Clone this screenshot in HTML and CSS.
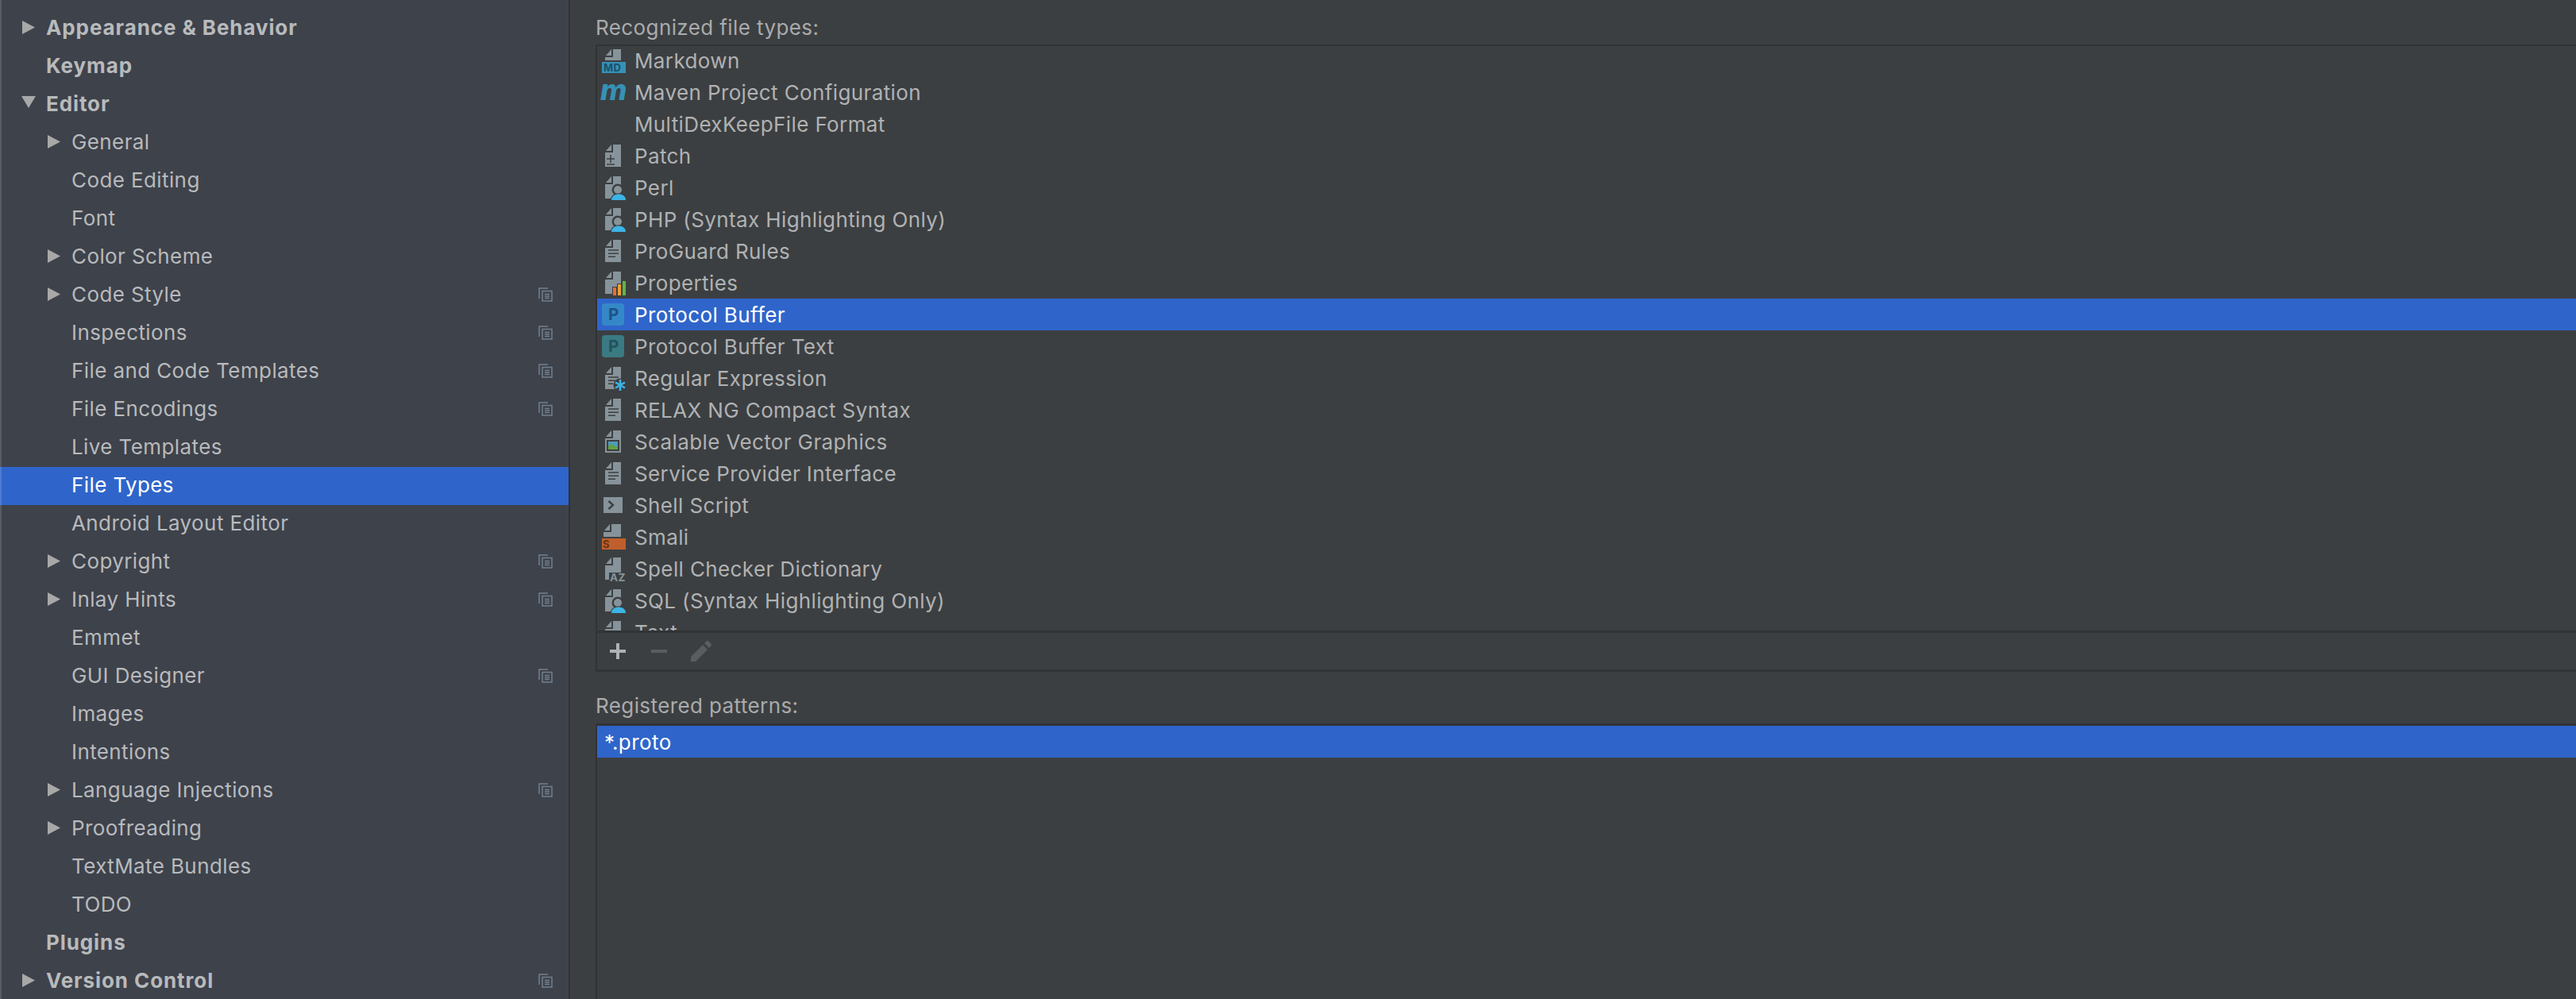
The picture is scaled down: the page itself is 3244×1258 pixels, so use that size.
FILE: index.html
```html
<!DOCTYPE html>
<html lang="en">
<head>
<meta charset="utf-8">
<title>File Types</title>
<link rel="stylesheet" href="styles.css">
</head>
<body>
<svg class="defs" width="0" height="0" aria-hidden="true">
  <defs>
    <g id="doc"><path d="M14 1H24V29H4V11H14Z M12 1V9H5Z" fill="#87939a"/></g>
    <g id="lines"><path d="M8 14h13M8 18.300h13M8 22.300h9" stroke="#3c3f41" stroke-width="1.500"/></g>
    <g id="person"><circle cx="20" cy="18" r="7.500" fill="#3c3f41"/><circle cx="20" cy="18" r="5" fill="#87939a"/><path d="M12 31c0-5 4-7.500 9-7.500s9 2.500 9 7.500z" fill="#3cb4e6" stroke="#3c3f41" stroke-width="2" paint-order="stroke"/></g>
    <symbol id="copy" viewBox="0 0 18 18"><path d="M1 14V1H12M5 4.500H17V17H5z M8 8.500h6M8 11h6M8 13.500h6" fill="none" stroke="#71808f" stroke-width="1.500"/></symbol>
    <symbol id="right" viewBox="0 0 16 17"><path d="M0 0l16 8.500L0 17z" fill="#a8a8a8"/></symbol>
    <symbol id="down" viewBox="0 0 18 15"><path d="M0 0h18L9 15z" fill="#a8a8a8"/></symbol>
  </defs>
</svg>
<div class="app">
  <nav class="side">
    <div class="row top"><svg class="tri"><use href="#right"/></svg><span>Appearance &amp; Behavior</span></div>
    <div class="row top"><i class="tri"></i><span>Keymap</span></div>
    <div class="row top"><svg class="tri tridown"><use href="#down"/></svg><span>Editor</span></div>
    <div class="row sub"><svg class="tri"><use href="#right"/></svg><span>General</span></div>
    <div class="row sub"><i class="tri"></i><span>Code Editing</span></div>
    <div class="row sub"><i class="tri"></i><span>Font</span></div>
    <div class="row sub"><svg class="tri"><use href="#right"/></svg><span>Color Scheme</span></div>
    <div class="row sub"><svg class="tri"><use href="#right"/></svg><span>Code Style</span><svg class="cp"><use href="#copy"/></svg></div>
    <div class="row sub"><i class="tri"></i><span>Inspections</span><svg class="cp"><use href="#copy"/></svg></div>
    <div class="row sub"><i class="tri"></i><span>File and Code Templates</span><svg class="cp"><use href="#copy"/></svg></div>
    <div class="row sub"><i class="tri"></i><span>File Encodings</span><svg class="cp"><use href="#copy"/></svg></div>
    <div class="row sub"><i class="tri"></i><span>Live Templates</span></div>
    <div class="row sub sel"><i class="tri"></i><span>File Types</span></div>
    <div class="row sub"><i class="tri"></i><span>Android Layout Editor</span></div>
    <div class="row sub"><svg class="tri"><use href="#right"/></svg><span>Copyright</span><svg class="cp"><use href="#copy"/></svg></div>
    <div class="row sub"><svg class="tri"><use href="#right"/></svg><span>Inlay Hints</span><svg class="cp"><use href="#copy"/></svg></div>
    <div class="row sub"><i class="tri"></i><span>Emmet</span></div>
    <div class="row sub"><i class="tri"></i><span>GUI Designer</span><svg class="cp"><use href="#copy"/></svg></div>
    <div class="row sub"><i class="tri"></i><span>Images</span></div>
    <div class="row sub"><i class="tri"></i><span>Intentions</span></div>
    <div class="row sub"><svg class="tri"><use href="#right"/></svg><span>Language Injections</span><svg class="cp"><use href="#copy"/></svg></div>
    <div class="row sub"><svg class="tri"><use href="#right"/></svg><span>Proofreading</span></div>
    <div class="row sub"><i class="tri"></i><span>TextMate Bundles</span></div>
    <div class="row sub"><i class="tri"></i><span>TODO</span></div>
    <div class="row top"><i class="tri"></i><span>Plugins</span></div>
    <div class="row top"><svg class="tri"><use href="#right"/></svg><span>Version Control</span><svg class="cp"><use href="#copy"/></svg></div>
  </nav>
  <main class="panel">
    <div class="label first">Recognized file types:</div>
    <section class="box types">
      <div class="list">
        <div class="item"><svg class="ic" viewBox="0 0 30 30"><path d="M14 1H24V15H4V11H14Z M12 1V9H5Z" fill="#87939a"/><rect y="17" width="30" height="14" fill="#3592b5"/><text class="tag" x="2" y="29">MD</text></svg><span>Markdown</span></div>
        <div class="item"><svg class="ic" viewBox="0 0 30 30"><text class="mvn" x="-2" y="25">m</text></svg><span>Maven Project Configuration</span></div>
        <div class="item"><i class="ic"></i><span>MultiDexKeepFile Format</span></div>
        <div class="item"><svg class="ic" viewBox="0 0 30 30"><use href="#doc"/><path d="M6 19h10M11 14v10M6 26h10" stroke="#3c3f41" stroke-width="1.500"/></svg><span>Patch</span></div>
        <div class="item"><svg class="ic" viewBox="0 0 30 30"><use href="#doc"/><use href="#person"/></svg><span>Perl</span></div>
        <div class="item"><svg class="ic" viewBox="0 0 30 30"><use href="#doc"/><use href="#person"/></svg><span>PHP (Syntax Highlighting Only)</span></div>
        <div class="item"><svg class="ic" viewBox="0 0 30 30"><use href="#doc"/><use href="#lines"/></svg><span>ProGuard Rules</span></div>
        <div class="item"><svg class="ic" viewBox="0 0 30 30"><use href="#doc"/><g stroke="#3c3f41" stroke-width="2" paint-order="stroke"><rect x="14" y="21" width="4" height="10" fill="#ee6d2a"/><rect x="20" y="17" width="4" height="14" fill="#e9a035"/><rect x="26" y="13" width="4" height="18" fill="#62b543"/></g></svg><span>Properties</span></div>
        <div class="item sel"><svg class="ic" viewBox="0 0 30 30"><rect y="1" width="28" height="28" rx="4" fill="#3488c8"/><text class="pb" x="8" y="22.300" fill="#1f5184">P</text></svg><span>Protocol Buffer</span></div>
        <div class="item"><svg class="ic" viewBox="0 0 30 30"><rect y="1" width="28" height="28" rx="4" fill="#3a7a82"/><text class="pb" x="8" y="22.300" fill="#23525c">P</text></svg><span>Protocol Buffer Text</span></div>
        <div class="item"><svg class="ic" viewBox="0 0 30 30"><use href="#doc"/><path d="M8 14h13M8 18.300h9M8 22.300h6" stroke="#3c3f41" stroke-width="1.500"/><circle cx="23" cy="24" r="8.500" fill="#3c3f41"/><path d="M23 17v14M17 20.500l12 7M29 20.500l-12 7" stroke="#3cb4e6" stroke-width="2.600"/></svg><span>Regular Expression</span></div>
        <div class="item"><svg class="ic" viewBox="0 0 30 30"><use href="#doc"/><use href="#lines"/></svg><span>RELAX NG Compact Syntax</span></div>
        <div class="item"><svg class="ic" viewBox="0 0 30 30"><use href="#doc"/><rect x="6" y="13" width="16" height="14" fill="#3c3f41"/><rect x="8" y="15" width="12" height="10" fill="#4f9bb7"/><path d="M8 25v-4c3-3 6-2 8 0l4 1v3z" fill="#62a043"/></svg><span>Scalable Vector Graphics</span></div>
        <div class="item"><svg class="ic" viewBox="0 0 30 30"><use href="#doc"/><use href="#lines"/></svg><span>Service Provider Interface</span></div>
        <div class="item"><svg class="ic" viewBox="0 0 30 30"><rect x="2" y="5" width="24" height="20" fill="#87939a"/><path d="M8.500 10l5.500 5-5.500 5" fill="none" stroke="#3c3f41" stroke-width="2.400"/></svg><span>Shell Script</span></div>
        <div class="item"><svg class="ic" viewBox="0 0 30 30"><path d="M12 -1H24V15H2V9H12Z M10 -1V7H3Z" fill="#87939a"/><rect y="17" width="30" height="14" fill="#bf5f2c"/><text class="tag dark" x="1" y="29">S</text></svg><span>Smali</span></div>
        <div class="item"><svg class="ic" viewBox="0 0 30 30"><use href="#doc"/><rect x="9" y="20" width="22" height="12" fill="#3c3f41"/><text class="tag az" x="10" y="31">AZ</text></svg><span>Spell Checker Dictionary</span></div>
        <div class="item"><svg class="ic" viewBox="0 0 30 30"><use href="#doc"/><use href="#person"/></svg><span>SQL (Syntax Highlighting Only)</span></div>
        <div class="item"><svg class="ic" viewBox="0 0 30 30"><use href="#doc"/></svg><span>Text</span></div>
      </div>
      <div class="tools">
        <svg class="tool" viewBox="0 0 20 20"><path d="M10 0v20M0 10h20" stroke="#afb1b3" stroke-width="4"/></svg>
        <svg class="tool" viewBox="0 0 20 20"><path d="M0 10h20" stroke="#5a5d5f" stroke-width="4"/></svg>
        <svg class="tool pen" viewBox="0 0 26 26"><path d="M0 26v-6L15 5l6 6L6 26z" fill="#5a5d5f"/><path d="M17 3l2.500-2.500c1-1 2-1 3 0l3 3c.7.700.7 1.700 0 2.500L23 9z" fill="#5a5d5f"/></svg>
      </div>
    </section>
    <div class="label second">Registered patterns:</div>
    <section class="box patterns">
      <div class="pattern">*.proto</div>
    </section>
  </main>
</div>
</body>
</html>
```

FILE: styles.css
```css
* { box-sizing: border-box; }
html, body { margin: 0; height: 100%; background: #3c3f41; overflow: hidden; }
.defs { position: absolute; }
.app { display: flex; width: 3244px; height: 1258px; font-family: Inter, "Liberation Sans", sans-serif; }

.side { position: relative; width: 718px; flex: none; padding-top: 12px; background: #3e424b; border-right: 2px solid #2f3133; overflow: hidden; }
.side::after { content: ""; position: absolute; left: 0; top: 0; bottom: 0; width: 2px; background: rgba(255, 255, 255, .14); }
.row { display: flex; align-items: center; height: 48px; padding-bottom: 3px; font-size: 26px; color: #b8babc; letter-spacing: .4px; }
.row span { flex: 1; white-space: nowrap; }
.top { padding-left: 28px; font-weight: 700; letter-spacing: .9px; }
.sub { padding-left: 60px; }
.tri { display: block; width: 16px; height: 17px; flex: none; margin-right: 14px; }
.tridown { width: 18px; height: 15px; margin: -5px 13px 0 -1px; }
.cp { width: 18px; height: 18px; flex: none; margin-right: 20px; }
.sel { background: #2f65ca; color: #fff; }

.panel { flex: 1; min-width: 0; padding-left: 32px; }
.label { font-size: 26px; color: #a9abad; line-height: 32px; letter-spacing: .4px; }
.first { padding-top: 19px; height: 56px; }
.second { margin-top: 27px; height: 38px; }
.box { border: 0 solid #313335; border-left-width: 2px; }
.types { height: 790px; border-top-width: 2px; border-bottom-width: 3px; }
.list { height: 738px; margin-top: -2px; overflow: hidden; }
.item { display: flex; align-items: center; height: 40px; font-size: 26px; letter-spacing: .38px; color: #b0b2b4; padding-left: 6px; }
.item span { white-space: nowrap; }
.item.sel { background: #2f65ca; color: #fff; }
.ic { display: block; width: 30px; height: 30px; flex: none; margin-right: 11px; overflow: visible; }
.tag { font: 700 13px Inter, sans-serif; fill: #1c4f6e; }
.tag.dark { fill: #6a3315; font-size: 13px; }
.tag.az { fill: #87939a; font-size: 13.5px; letter-spacing: .3px; }
.mvn { font: italic 800 36px Inter, sans-serif; fill: #3592b5; }
.pb { font: 700 20.500px Inter, sans-serif; }
.tools { display: flex; align-items: center; gap: 32px; height: 49px; padding-left: 16px; border-top: 3px solid #313335; }
.tool { display: block; width: 20px; height: 20px; flex: none; overflow: visible; }
.tool.pen { width: 26px; height: 26px; margin-left: -2px; }
.patterns { height: 347px; border-top-width: 3px; }
.pattern { height: 40px; background: #2f65ca; color: #fff; font-size: 26px; letter-spacing: .45px; display: flex; align-items: center; padding-left: 9px; }
```
